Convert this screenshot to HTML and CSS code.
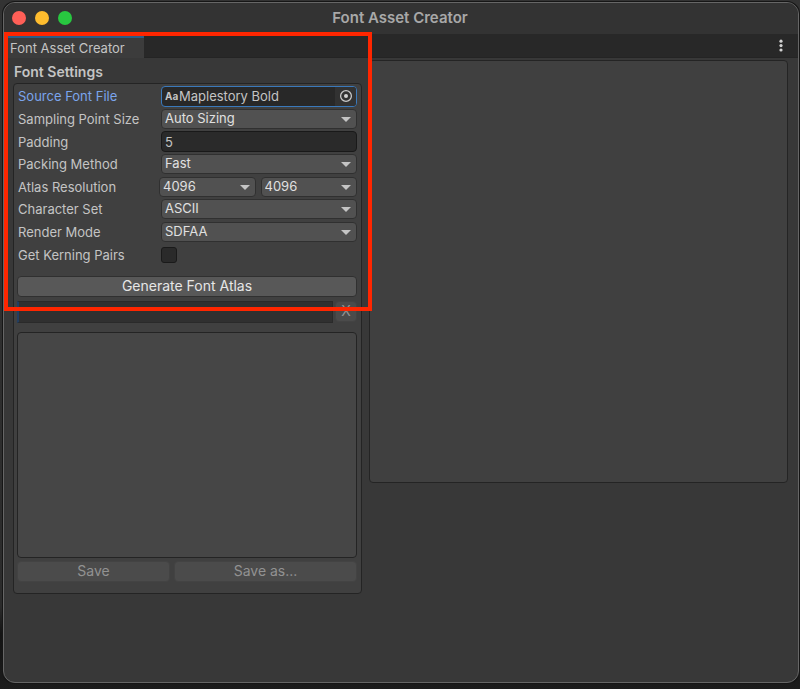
FILE: index.html
```html
<!DOCTYPE html>
<html lang="en">
<head>
<meta charset="utf-8">
<title>Font Asset Creator</title>
<link rel="stylesheet" href="styles.css">
</head>
<body>
<main class="window">
  <header class="titlebar">
    <div class="lights">
      <button class="light close" aria-label="Close"></button>
      <button class="light minimize" aria-label="Minimize"></button>
      <button class="light maximize" aria-label="Maximize"></button>
    </div>
    <h1>Font Asset Creator</h1>
  </header>
  <nav class="tabs">
    <button class="tab">Font Asset Creator</button>
    <button class="more" aria-label="More options">
      <svg width="6" height="14" viewBox="0 0 6 14"><g fill="#d2d2d2"><circle cx="3" cy="2.2" r="1.6"/><circle cx="3" cy="6.6" r="1.6"/><circle cx="3" cy="11" r="1.6"/></g></svg>
    </button>
  </nav>
  <div class="content">
    <section class="settings">
      <h2>Font Settings</h2>
      <div class="group">
        <form class="fields">
          <label class="active" for="source">Source Font File</label>
          <div class="object-field">
            <span class="font-icon" aria-hidden="true">Aa</span>
            <input id="source" type="text" value="Maplestory Bold">
            <button type="button" class="picker" aria-label="Pick font">
              <svg width="14" height="14" viewBox="0 0 14 14"><circle cx="7" cy="7" r="5.4" fill="none" stroke="#c8c8c8" stroke-width="1.3"/><circle cx="7" cy="7" r="2" fill="#d2d2d2"/></svg>
            </button>
          </div>
          <label for="sampling">Sampling Point Size</label>
          <div class="dropdown"><select id="sampling"><option>Auto Sizing</option></select></div>
          <label for="padding">Padding</label>
          <input class="number" id="padding" type="text" value="5">
          <label for="packing">Packing Method</label>
          <div class="dropdown"><select id="packing"><option>Fast</option></select></div>
          <label for="atlas-width">Atlas Resolution</label>
          <div class="pair">
            <div class="dropdown"><select id="atlas-width"><option>4096</option></select></div>
            <div class="dropdown"><select aria-label="Atlas height"><option>4096</option></select></div>
          </div>
          <label for="charset">Character Set</label>
          <div class="dropdown"><select id="charset"><option>ASCII</option></select></div>
          <label for="render">Render Mode</label>
          <div class="dropdown"><select id="render"><option>SDFAA</option></select></div>
          <label for="kerning">Get Kerning Pairs</label>
          <input class="check" id="kerning" type="checkbox">
        </form>
        <button class="button generate">Generate Font Atlas</button>
        <div class="progress-row">
          <div class="progress"></div>
          <button class="button cancel" disabled>X</button>
        </div>
        <div class="report"></div>
        <div class="actions">
          <button class="button" disabled>Save</button>
          <button class="button" disabled>Save as...</button>
        </div>
      </div>
    </section>
    <section class="preview" aria-label="Atlas preview"></section>
  </div>
  <div class="highlight" aria-hidden="true"></div>
</main>
</body>
</html>
```
FILE: styles.css
```css
* {
  box-sizing: border-box;
}

body {
  margin: 0;
  min-height: 100vh;
  display: flex;
  padding: 2px 1px 6px 3px;
  background: linear-gradient(#333 0, #2b2b2b 88%, #141414 92%, #1c1c1c 100%);
  color: #c4c4c4;
  font: 14px/20px Inter, "Liberation Sans", sans-serif;
}

button,
input,
select {
  margin: 0;
  padding: 0;
  border: 0;
  color: inherit;
  font: inherit;
  outline: 0;
}

button {
  background: none;
}

.window {
  position: relative;
  flex: 1;
  min-width: 0;
  border: 1px solid #666;
  border-radius: 12px;
  background: #383838;
  box-shadow: 0 0 0 1px #161616;
}

.titlebar {
  display: grid;
  grid-template-columns: 1fr auto 1fr;
  align-items: center;
  height: 31px;
  padding: 0 10px 2px 8px;
  border-radius: 11px 11px 0 0;
  background: #333;
}

h1,
h2 {
  margin: 0;
  font-weight: 600;
}

h1 {
  color: #a8a8a8;
  font-size: 15px;
}

.lights {
  display: flex;
  gap: 9px;
}

.light {
  width: 14px;
  height: 14px;
  border-radius: 50%;
}

.close {
  background: #ff5f57;
}

.minimize {
  background: #febc2e;
}

.maximize {
  background: #28c840;
}

.tabs {
  display: flex;
  justify-content: space-between;
  height: 24px;
  padding-right: 14px;
  border-bottom: 1px solid #242424;
  background: #282828;
}

.tab {
  height: 24px;
  padding: 0 19px 0 6px;
  border-top: 4px solid #2c5d87;
  background: #3c3c3c;
  font-size: 13px;
}

.more {
  display: flex;
  align-items: center;
}

.content {
  display: flex;
  align-items: flex-start;
  gap: 7px;
  padding: 2px 10px 0 9px;
}

.settings {
  flex: 0 0 349px;
}

h2 {
  height: 23px;
  padding: 2px 0 0 1px;
  font-size: 14px;
}

.group {
  padding: 1px 4px 11px 3px;
  border: 1px solid #242424;
  border-radius: 4px;
  background: #404040;
}

.fields {
  display: grid;
  grid-template-columns: 144px 1fr;
  grid-template-rows: repeat(8, 1fr);
  align-items: center;
  height: 181px;
  font-size: 13px;
}

.object-field {
  display: flex;
  align-items: center;
  height: 21px;
  padding-left: 3px;
  border: 1px solid #3a79bb;
  border-radius: 4px;
  background: #282828;
  overflow: hidden;
}

.object-field input {
  flex: 1;
  min-width: 0;
  background: none;
}

.font-icon {
  width: 14px;
  font-size: 10px;
  font-weight: 700;
}

.picker {
  display: grid;
  place-items: center;
  width: 21px;
  height: 20px;
  background: #323232;
}

.dropdown {
  position: relative;
}

.dropdown::after {
  content: "";
  position: absolute;
  top: 8px;
  right: 6px;
  border: 5px solid transparent;
  border-top-color: #c4c4c4;
  border-bottom: 0;
  pointer-events: none;
}

select {
  display: block;
  appearance: none;
  width: 100%;
  height: 20px;
  padding: 0 0 2px 3px;
  border: 1px solid #303030;
  border-radius: 4px;
  background: #515151;
  color: #e0e0e0;
  line-height: 16px;
}

.pair {
  display: grid;
  grid-template-columns: 1fr 1fr;
  gap: 5px;
  margin-left: -2px;
}

.number {
  width: 100%;
  height: 21px;
  padding-left: 3px;
  border: 1px solid #191919;
  border-radius: 4px;
  background: #2a2a2a;
}

.check {
  appearance: none;
  width: 16px;
  height: 16px;
  border: 1px solid #1a1a1a;
  border-radius: 3px;
  background: #2a2a2a;
}

.fields label {
  padding-left: 1px;
}

.fields .active {
  color: #7ba5ec;
}

.button {
  height: 21px;
  padding-bottom: 1px;
  border: 1px solid #303030;
  border-radius: 4px;
  background: #585858;
  color: #e6e6e6;
  line-height: 18px;
}

.button:disabled {
  border-color: #434343;
  background: #4b4b4b;
  color: #929292;
}

.generate {
  display: block;
  width: 100%;
  margin-top: 10px;
}

.progress-row {
  display: flex;
  gap: 2px;
  margin-top: 4px;
}

.progress {
  flex: 1;
  height: 22px;
  border: 1px solid #2a2a2a;
  border-left: 2px solid #223e62;
  background: #303030;
}

.cancel {
  width: 22px;
}

.report {
  height: 226px;
  margin: 9px 0 3px;
  border: 1px solid #242424;
  border-radius: 4px;
  background: #464646;
}

.actions {
  display: grid;
  grid-template-columns: 153fr 183fr;
  gap: 4px;
}

.preview {
  flex: 1;
  aspect-ratio: 419 / 423;
  border: 1px solid #242424;
  border-radius: 4px;
  background: #404040;
}

.highlight {
  position: absolute;
  top: 29px;
  left: 0;
  width: 368px;
  height: 279px;
  border: 4px solid #ff2600;
}
```
